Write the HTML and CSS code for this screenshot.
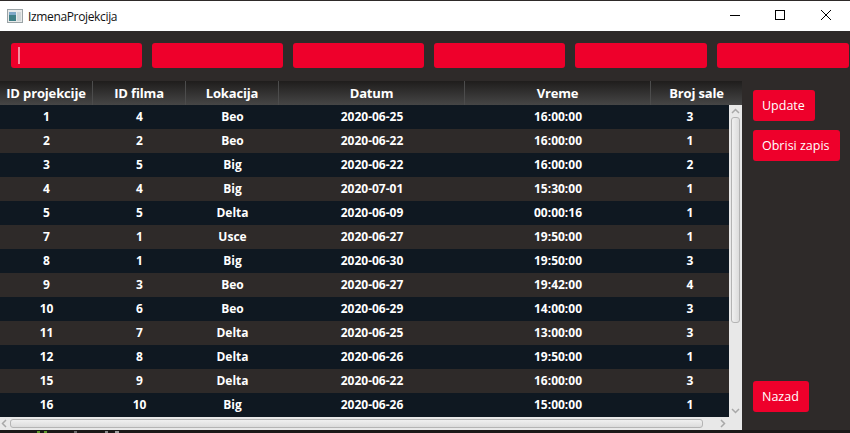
FILE: index.html
```html
<!DOCTYPE html>
<html lang="en">
<head>
 <meta charset="UTF-8">
 <meta name="viewport" content="width=device-width, initial-scale=1.0">
 <title>IzmenaProjekcija</title>
 <link rel="stylesheet" href="styles.css">
</head>
<body>
 <div class="window">
  <header class="title-bar">
   <svg class="app-icon" width="16" height="16" viewBox="0 0 16 16">
    <rect x="0.5" y="1.5" width="15" height="13" fill="#e8eaea" stroke="#9aa3a6"/>
    <rect x="2" y="4" width="7" height="9" fill="#3f7f86"/>
    <rect x="2" y="4" width="7" height="3" fill="#7fa8c8"/>
    <rect x="10" y="4" width="4" height="9" fill="#cfd6d8"/>
   </svg>
   <span class="app-title">IzmenaProjekcija</span>
   <div class="window-controls">
    <svg width="46" height="30" viewBox="0 0 46 30"><path d="M18 14.5h10" stroke="#000" fill="none"/></svg>
    <svg width="46" height="30" viewBox="0 0 46 30"><rect x="17.5" y="9.5" width="9" height="9" stroke="#000" fill="none"/></svg>
    <svg width="46" height="30" viewBox="0 0 46 30"><path d="M17 9l10 10M27 9L17 19" stroke="#000" fill="none"/></svg>
   </div>
  </header>

  <div class="input-row">
   <div class="field"><span class="caret"></span></div>
   <div class="field"></div>
   <div class="field"></div>
   <div class="field"></div>
   <div class="field"></div>
   <div class="field"></div>
  </div>

  <main class="content">
   <div class="table-box">
    <div class="table-head">
     <div class="cell">ID projekcije</div>
     <div class="cell">ID filma</div>
     <div class="cell">Lokacija</div>
     <div class="cell">Datum</div>
     <div class="cell">Vreme</div>
     <div class="cell">Broj sale</div>
    </div>
    <div class="table-middle">
     <div class="table-rows" id="rows"></div>
     <div class="vscroll">
      <svg class="arrow" width="13" height="12" viewBox="0 0 13 12"><path d="M3 8l3.5-3.5L10 8" stroke="#a8a8a8" stroke-width="1.5" fill="none"/></svg>
      <div class="vthumb"></div>
      <svg class="arrow arrow-end" width="13" height="12" viewBox="0 0 13 12"><path d="M3 4l3.5 3.5L10 4" stroke="#a8a8a8" stroke-width="1.5" fill="none"/></svg>
     </div>
    </div>
    <div class="hscroll">
     <svg class="arrow" width="10" height="13" viewBox="0 0 10 13"><path d="M6 3L2.5 6.5 6 10" stroke="#a8a8a8" stroke-width="1.5" fill="none"/></svg>
     <div class="hthumb"></div>
     <svg class="arrow" width="10" height="13" viewBox="0 0 10 13"><path d="M4 3l3.5 3.5L4 10" stroke="#a8a8a8" stroke-width="1.5" fill="none"/></svg>
     <div class="corner"></div>
    </div>
   </div>
   <aside class="actions">
    <button class="btn">Update</button>
    <button class="btn">Obrisi zapis</button>
    <button class="btn btn-back">Nazad</button>
   </aside>
  </main>

  <!-- bit of the desktop showing under the window -->
  <svg class="desktop-strip" width="850" height="3" viewBox="0 0 850 3">
   <rect x="37" y="1" width="3" height="2" fill="#5f9a2c"/>
   <rect x="44" y="1" width="3" height="2" fill="#5f9a2c"/>
   <rect x="74" y="1" width="3" height="2" fill="#6b6b6b"/>
   <rect x="105" y="1" width="3" height="2" fill="#8a8a8a"/>
   <rect x="115" y="1" width="4" height="2" fill="#a0a0a0"/>
  </svg>
 </div>

 <script>
 const data = [
  [1, 4, 'Beo', '2020-06-25', '16:00:00', 3],
  [2, 2, 'Beo', '2020-06-22', '16:00:00', 1],
  [3, 5, 'Big', '2020-06-22', '16:00:00', 2],
  [4, 4, 'Big', '2020-07-01', '15:30:00', 1],
  [5, 5, 'Delta', '2020-06-09', '00:00:16', 1],
  [7, 1, 'Usce', '2020-06-27', '19:50:00', 1],
  [8, 1, 'Big', '2020-06-30', '19:50:00', 3],
  [9, 3, 'Beo', '2020-06-27', '19:42:00', 4],
  [10, 6, 'Beo', '2020-06-29', '14:00:00', 3],
  [11, 7, 'Delta', '2020-06-25', '13:00:00', 3],
  [12, 8, 'Delta', '2020-06-26', '19:50:00', 1],
  [15, 9, 'Delta', '2020-06-22', '16:00:00', 3],
  [16, 10, 'Big', '2020-06-26', '15:00:00', 1]
 ];
 const rows = document.getElementById('rows');
 data.forEach(row => {
  const div = document.createElement('div');
  div.className = 'table-row';
  row.forEach(value => {
   const cell = document.createElement('div');
   cell.className = 'cell';
   cell.textContent = value;
   div.appendChild(cell);
  });
  rows.appendChild(div);
 });
 </script>
</body>
</html>
```

FILE: styles.css
```css
body {
 margin: 0;
 font-family: "Open Sans", "Noto Sans", sans-serif;
 background-color: #2e2a29;
 overflow: hidden;
}

.window {
 display: flex;
 flex-direction: column;
 width: 850px;
 height: 433px;
}

.title-bar {
 display: flex;
 align-items: center;
 flex: none;
 height: 30px;
 margin-top: 1px;
 background-color: white;
 color: #111;
 font-size: 12px;
 letter-spacing: -0.35px;
}

.app-icon {
 margin-left: 7px;
 margin-right: 5px;
}

.window-controls {
 display: flex;
 margin-left: auto;
}

.input-row {
 display: grid;
 grid-template-columns: repeat(4, 131px) 132px 132px;
 flex: none;
 gap: 10px;
 padding: 12px 0 0 11px;
}

.field {
 height: 25px;
 border-radius: 3px;
 background-color: #ee002b;
 display: flex;
 align-items: center;
 padding-left: 7px;
}

.caret {
 width: 2px;
 height: 17px;
 background-color: #f58a9e;
}

.content {
 display: flex;
 flex: none;
 margin-top: 13px;
}

.table-box {
 width: 742px;
 height: 349px;
 display: flex;
 flex-direction: column;
 flex: none;
}

.table-head {
 display: grid;
 grid-template-columns: 93px 93px 93px 186px 186px 91px;
 flex: none;
 height: 24px;
 background: linear-gradient(#1f1d1c, #464646);
 color: white;
 font-size: 13px;
 font-weight: 700;
 letter-spacing: -0.15px;
}

.table-head .cell {
 display: flex;
 align-items: center;
 justify-content: center;
 border-right: 1px solid #4c4c4c;
 box-sizing: border-box;
 white-space: nowrap;
}

.table-head .cell:last-child {
 border-right: none;
}

.table-middle {
 display: flex;
 flex: 1;
 min-height: 0;
}

.table-rows {
 width: 729px;
 flex: none;
 overflow: hidden;
}

.table-row {
 display: grid;
 grid-template-columns: 93px 93px 93px 186px 186px 78px;
 height: 24px;
 background-color: #0f1821;
 color: white;
 font-size: 12px;
 font-weight: 700;
}

.table-row:nth-child(even) {
 background-color: #2e2a29;
}

.table-row .cell {
 display: flex;
 align-items: center;
 justify-content: center;
 padding-bottom: 2px;
 box-sizing: border-box;
}

.vscroll {
 width: 13px;
 background-color: #e8e8e8;
 display: flex;
 flex-direction: column;
 align-items: center;
}

.arrow {
 flex: none;
}

.arrow-end {
 margin-top: auto;
}

.vthumb {
 width: 9px;
 height: 206px;
 border: 1px solid #b4b4b4;
 border-radius: 3px;
 background: linear-gradient(90deg, #f0f0f0, #dcdcdc);
 box-sizing: border-box;
}

.hscroll {
 display: flex;
 align-items: center;
 flex: none;
 height: 13px;
 background-color: #e8e8e8;
}

.hthumb {
 width: 693px;
 height: 9px;
 margin-right: 14px;
 border: 1px solid #b4b4b4;
 border-radius: 3px;
 background: linear-gradient(#f0f0f0, #dcdcdc);
 box-sizing: border-box;
}

.corner {
 width: 13px;
}

.actions {
 display: flex;
 flex-direction: column;
 align-items: flex-start;
 gap: 9px;
 padding: 9px 0 9px 11px;
 height: 340px;
 box-sizing: border-box;
}

.btn {
 height: 31px;
 padding: 0 10px 0 9px;
 border: none;
 border-radius: 3px;
 background-color: #ee002b;
 color: white;
 font-family: inherit;
 font-size: 12.5px;
}

.btn-back {
 margin-top: auto;
}

.desktop-strip {
 display: block;
 flex: none;
 background-color: #1b1918;
}
```
